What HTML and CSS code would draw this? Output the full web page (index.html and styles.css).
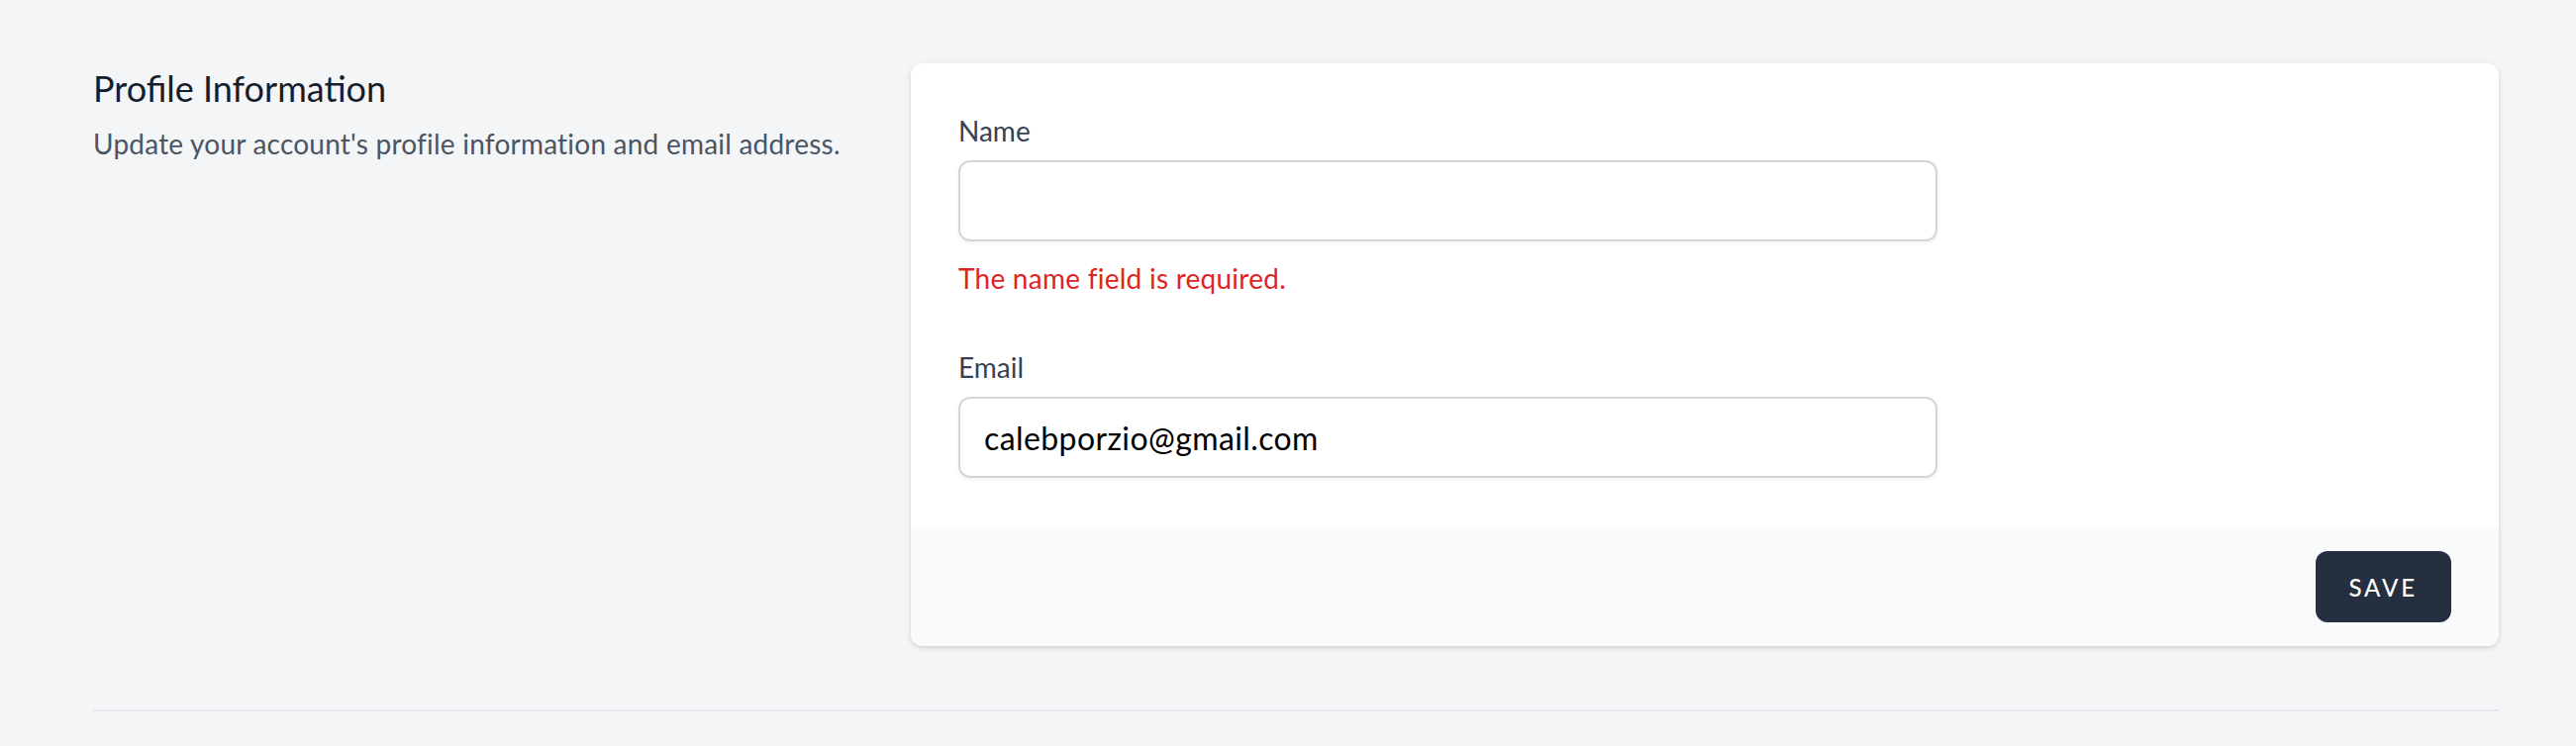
FILE: index.html
```html
<!DOCTYPE html>
<html lang="en">
<head>
<meta charset="utf-8">
<title>Profile Information</title>
<link rel="stylesheet" href="styles.css">
</head>
<body>
<div class="page">
  <div class="section">
    <div class="section-aside">
      <h3 class="section-title">Profile Information</h3>
      <p class="section-desc">Update your account's profile information and email address.</p>
    </div>
    <form class="card">
      <div class="card-body">
        <div class="field">
          <label class="label" for="name">Name</label>
          <input class="input" id="name" type="text" value="">
          <p class="error">The name field is required.</p>
        </div>
        <div class="field">
          <label class="label" for="email">Email</label>
          <input class="input" id="email" type="text" value="calebporzio@gmail.com">
        </div>
      </div>
      <div class="card-footer">
        <button class="btn" type="button">Save</button>
      </div>
    </form>
  </div>
  <div class="divider"></div>
</div>
</body>
</html>
```

FILE: styles.css
```css
html, body {
  margin: 0;
  padding: 0;
}

body {
  background: #f4f5f7;
  font-family: "Lato", "Noto Sans", "DejaVu Sans", sans-serif;
  -webkit-font-smoothing: antialiased;
}

.page {
  padding: 64px 0 0 94px;
  width: 2430px;
}

.section {
  display: grid;
  grid-template-columns: 778px 1604px;
  column-gap: 48px;
  align-items: start;
}

.section-title {
  margin: 0;
  font-size: 36px;
  line-height: 50px;
  font-weight: 400;
  color: #161e2e;
}

.section-desc {
  margin: 11px 0 0;
  font-size: 28px;
  line-height: 40px;
  letter-spacing: 0.22px;
  color: #4b5563;
}

.card {
  margin: 0;
  background: #ffffff;
  border-radius: 12px;
  overflow: hidden;
  box-shadow: 0 2px 6px rgba(0, 0, 0, 0.1), 0 2px 4px rgba(0, 0, 0, 0.06);
}

.card-body {
  padding: 48px 48px 50px;
  display: flex;
  flex-direction: column;
  gap: 50px;
}

.field {
  display: flex;
  flex-direction: column;
  width: 989px;
}

.label {
  display: block;
  font-size: 28px;
  line-height: 40px;
  color: #374151;
}

.input {
  display: block;
  box-sizing: border-box;
  width: 100%;
  height: 82px;
  margin-top: 10px;
  padding: 0 24px;
  border: 2px solid #d2d6dc;
  border-radius: 12px;
  background: #ffffff;
  box-shadow: 0 2px 4px rgba(0, 0, 0, 0.05);
  font-family: inherit;
  font-size: 32px;
  letter-spacing: 0.4px;
  color: #000000;
  outline: none;
}

.error {
  margin: 17px 0 0;
  font-size: 28px;
  line-height: 40px;
  letter-spacing: 0.25px;
  color: #e02424;
}

.card-footer {
  display: flex;
  justify-content: flex-end;
  padding: 24px 48px;
  background: #f9fafb;
}

.btn {
  height: 72px;
  padding: 0 32px;
  border: 2px solid transparent;
  border-radius: 12px;
  background: #252f3f;
  color: #ffffff;
  font-family: inherit;
  font-size: 24px;
  font-weight: 500;
  letter-spacing: 0.12em;
  text-transform: uppercase;
  cursor: pointer;
}

.divider {
  margin-top: 64px;
  border-top: 2px solid #e5e7eb;
}
```
